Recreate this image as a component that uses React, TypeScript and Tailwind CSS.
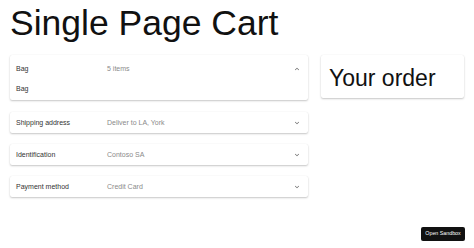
import React from "react";

function Chevron({ up }: { up?: boolean }) {
  return (
    <svg width="8" height="8" viewBox="0 0 24 24" className="text-[#555]">
      <path
        d={up ? "M7.41 15.41 12 10.83l4.59 4.58L18 14l-6-6-6 6z" : "M7.41 8.59 12 13.17l4.59-4.58L18 10l-6 6-6-6z"}
        fill="currentColor"
      />
    </svg>
  );
}

function Row({ label, value, up }: { label: string; value: string; up?: boolean }) {
  return (
    <div className="flex h-[21px] items-center pl-[6px] pr-[7px] text-[7px] leading-[8px]">
      <span className="w-[91px] text-[#333]">{label}</span>
      <span className="flex-1 text-[#8a8a8a]">{value}</span>
      <Chevron up={up} />
    </div>
  );
}

export default function App() {
  return (
    <div className="relative min-h-screen bg-white font-['Liberation_Sans',Arial,sans-serif]">
      <h1 className="pl-[10px] pt-[3px] text-[35.5px] leading-[40px] text-[#111]">Single Page Cart</h1>
      <div className="mt-[12px] flex items-start gap-[13px] pl-[10px]">
        <div className="flex w-[298px] flex-col gap-[11px]">
          <div className="rounded-[2px] bg-white shadow-[0_1px_2px_rgba(0,0,0,0.22),0_0_1px_rgba(0,0,0,0.08)]">
            <div className="flex h-[28px] items-center pl-[6px] pr-[7px] text-[7px] leading-[8px]">
              <span className="w-[91px] text-[#333]">Bag</span>
              <span className="flex-1 text-[#8a8a8a]">5 items</span>
              <Chevron up />
            </div>
            <div className="pb-[7px] pl-[6px] pt-[2px] text-[7px] leading-[8px] text-[#333]">Bag</div>
          </div>
          <div className="mt-[1px] rounded-[2px] bg-white shadow-[0_1px_2px_rgba(0,0,0,0.22),0_0_1px_rgba(0,0,0,0.08)]">
            <Row label="Shipping address" value="Deliver to LA, York" />
          </div>
          <div className="rounded-[2px] bg-white shadow-[0_1px_2px_rgba(0,0,0,0.22),0_0_1px_rgba(0,0,0,0.08)]">
            <Row label="Identification" value="Contoso SA" />
          </div>
          <div className="rounded-[2px] bg-white shadow-[0_1px_2px_rgba(0,0,0,0.22),0_0_1px_rgba(0,0,0,0.08)]">
            <Row label="Payment method" value="Credit Card" />
          </div>
        </div>
        <div className="flex h-[43px] w-[143px] items-center rounded-[2px] bg-white pl-[8px] pt-[2px] shadow-[0_1px_2px_rgba(0,0,0,0.22),0_0_1px_rgba(0,0,0,0.08)]">
          <span className="text-[23px] leading-[26px] text-[#111]">Your order</span>
        </div>
      </div>
      <div className="absolute left-[421px] top-[227px] flex h-[14px] w-[44px] items-center justify-center rounded-[2px] bg-[#111] text-[5.3px] text-white">
        Open Sandbox
      </div>
    </div>
  );
}
